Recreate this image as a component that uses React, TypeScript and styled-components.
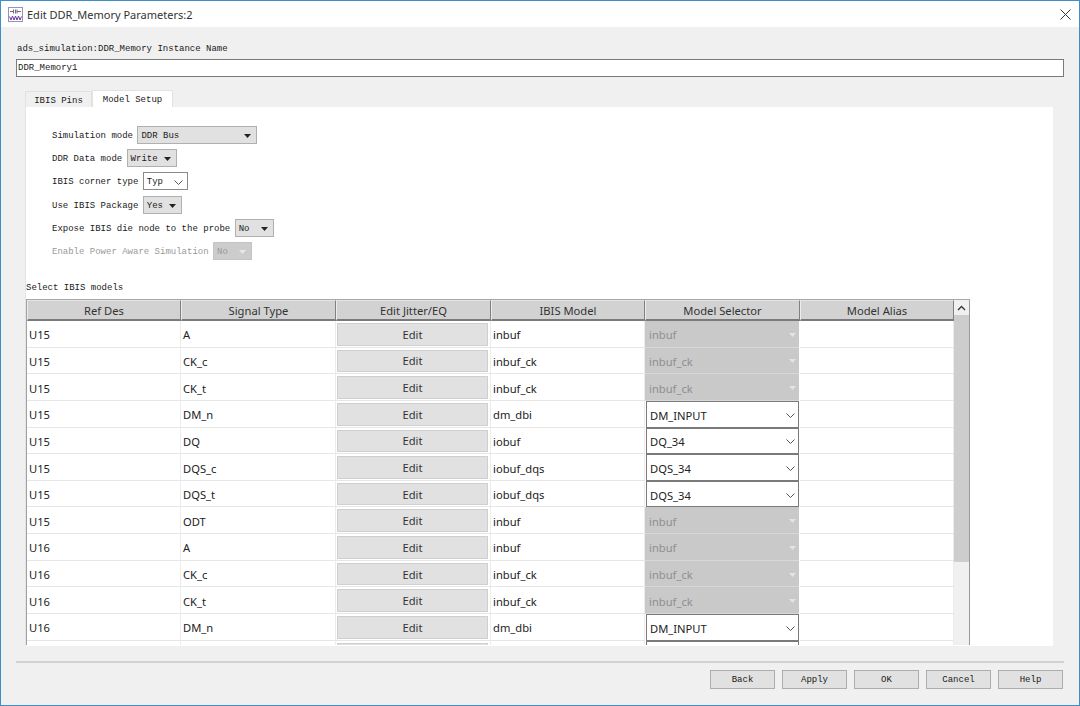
import React from "react";
import styled, { createGlobalStyle } from "styled-components";

const Global = createGlobalStyle`
  * { box-sizing: border-box; }
  html, body { margin: 0; padding: 0; background: #f0f0f0; }
`;
const mono = `"Liberation Mono", "DejaVu Sans Mono", monospace`;
const sans = `"Noto Sans", "Open Sans", sans-serif`;

const Win = styled.div`
  width: 1080px; height: 706px; overflow: hidden;
  border: 1px solid #3d8ec9;
  background: #f0f0f0; display: flex; flex-direction: column;
  font-family: ${mono}; font-size: 9px; color: #1a1a1a;
`;
const TitleBar = styled.div`
  height: 26px; flex: none; background: #fff; display: flex; align-items: center;
  padding: 0 8px 0 7px; gap: 4px;
  font-family: ${sans}; font-size: 11px; color: #333;
`;
const TitleText = styled.span` flex: 1; `;
const Main = styled.div`
  flex: 1; min-height: 0; display: flex; flex-direction: column; padding: 15px 15px 0 15px;
`;
const NameLabel = styled.div` height: 17px; line-height: 12px; padding: 1px 0 0 1px; `;
const NameInput = styled.div`
  height: 18px; flex: none; background: #fff; border: 1px solid #7a7a7a; padding-left: 1px; line-height: 16px;
`;
const Tabs = styled.div`
  display: flex; align-items: flex-end; height: 30px; flex: none; margin-left: 9px;
`;
const Tab = styled.div<{ $active?: boolean }>`
  height: ${(p) => (p.$active ? 17 : 16)}px; line-height: ${(p) => (p.$active ? 18 : 19)}px;
  text-align: center;
  width: ${(p) => (p.$active ? 81 : 67)}px;
  background: ${(p) => (p.$active ? "#fff" : "#f0f0f0")};
  border: 1px solid #e2e2e2; border-bottom: none;
  white-space: nowrap;
`;
const Pane = styled.div`
  margin-left: 9px; width: 1028px; height: 539px; flex: none; background: #fff;
  border-left: 1px solid #e4e4e4; display: flex; flex-direction: column; padding: 19px 0 0 0;
`;
const Form = styled.div`
  display: flex; flex-direction: column; gap: 5.2px; padding-left: 26px; height: 156px; flex: none;
`;
const FormRow = styled.div<{ $disabled?: boolean }>`
  display: flex; align-items: center; gap: 4.4px; height: 18px;
  color: ${(p) => (p.$disabled ? "#9a9a9a" : "#1a1a1a")};
`;
const FieldLabel = styled.span` padding-top: 2px; white-space: nowrap; `;
const Select = styled.div<{ $w: number; $plain?: boolean; $disabled?: boolean }>`
  width: ${(p) => p.$w}px; height: 18px; display: flex; align-items: center; justify-content: space-between;
  padding: 2px ${(p) => (p.$plain ? 4 : 5)}px 0 3px;
  background: ${(p) => (p.$plain ? "#fff" : p.$disabled ? "#cccccc" : "#e1e1e1")};
  border: 1px solid ${(p) => (p.$plain ? "#8a8a8a" : p.$disabled ? "#c4c4c4" : "#b0b0b0")};
`;
const SectionLabel = styled.div` height: 17px; line-height: 13px; flex: none; `;
const TableFrame = styled.div`
  width: 944px; height: 346px; display: flex; flex: none; overflow: hidden;
  border-top: 1px solid #a8a8a8; border-left: 1px solid #a0a0a0;
`;
const Grid = styled.div` width: 927px; flex: none; display: flex; flex-direction: column; `;
const Columns = "154px 155px 155px 154px 155px 154px";
const HeaderRow = styled.div`
  display: grid; grid-template-columns: ${Columns}; height: 21px; flex: none;
`;
const HeaderCell = styled.div`
  background: #d2d2d2; border-right: 1px solid #808080; border-bottom: 2px solid #7a7a7a;
  border-left: 1px solid #ececec; border-top: 1px solid #e4e4e4;
  display: flex; align-items: center; justify-content: center;
  font-family: ${sans}; font-size: 11.2px; color: #333;
`;
const Row = styled.div`
  display: grid; grid-template-columns: ${Columns}; height: 26.65px; flex: none;
  font-family: ${sans}; font-size: 11.2px; color: #222;
`;
const Cell = styled.div`
  border-right: 1px solid #ececec; border-bottom: 1px solid #e6e6e6; background: #fff;
  display: flex; align-items: center; padding: 2px 0 0 2px; white-space: nowrap;
`;
const ButtonCell = styled(Cell)` padding: 2px 2px 1px 1px; `;
const EditButton = styled.div`
  flex: 1; height: 100%; background: #e1e1e1; border: 1px solid #cfcfcf;
  display: flex; align-items: center; justify-content: center; color: #333;
`;
const ComboCell = styled(Cell)<{ $disabled?: boolean }>`
  padding: 2px 3px 0 ${(p) => (p.$disabled ? 4 : 3)}px; justify-content: space-between;
  background: ${(p) => (p.$disabled ? "#c9c9c9" : "#fff")};
  color: ${(p) => (p.$disabled ? "#8f8f8f" : "#222")};
  border: ${(p) => (p.$disabled ? "none" : "1px solid #7a7a7a")};
  border-bottom: ${(p) => (p.$disabled ? "1px solid #d8d8d8" : "1px solid #7a7a7a")};
  margin: 0 1px 0 ${(p) => (p.$disabled ? 0 : 1)}px;
`;
const Scrollbar = styled.div`
  flex: 1; background: #f0f0f0; display: flex; flex-direction: column; border-right: 1px solid #9a9a9a;
`;
const ScrollUp = styled.div`
  height: 15px; display: flex; align-items: center; justify-content: center; background: #f0f0f0;
`;
const ScrollThumb = styled.div` height: 247px; background: #cdcdcd; `;
const Footer = styled.div`
  margin-top: 15px; border-top: 2px solid #d2d2d2; display: flex; justify-content: flex-end; gap: 7px;
  padding: 7px 1px 0 0; flex: none;
`;
const Btn = styled.div`
  width: 65px; height: 19px; background: #e1e1e1; border: 1px solid #adadad;
  display: flex; align-items: center; justify-content: center; padding-top: 1px;
`;

const Tri = ({ c = "#222" }: { c?: string }) => (
  <svg width="7" height="4" viewBox="0 0 7 4"><path d="M0 0h7L3.5 4z" fill={c} /></svg>
);
const Chev = ({ c = "#555" }: { c?: string }) => (
  <svg width="9" height="5" viewBox="0 0 9 5" fill="none"><path d="M.5.5l4 4 4-4" stroke={c} /></svg>
);
const AppIcon = () => (
  <svg width="15" height="15" viewBox="0 0 15 15" fill="none">
    <rect x=".5" y=".5" width="14" height="14" fill="#fff" stroke="#9a90b8" />
    <path d="M2 4.5h3.5M9 4.5h4M5.5 2.5v4M7.5 2.5v4M9 2.5v4" stroke="#6f6a88" />
    <path d="M1.5 9.5l1.5 3.5 1.5-4 1.5 4 1.5-4 1.5 4 1.5-4 1.5 4 1.5-3.5" stroke="#6a3a9c" />
  </svg>
);
const CloseIcon = () => (
  <svg width="11" height="11" viewBox="0 0 11 11"><path d="M.5.5l10 10M10.5.5l-10 10" stroke="#333" /></svg>
);

type R = [string, string, string, string, boolean];
const rows: R[] = [
  ["U15", "A", "inbuf", "inbuf", true],
  ["U15", "CK_c", "inbuf_ck", "inbuf_ck", true],
  ["U15", "CK_t", "inbuf_ck", "inbuf_ck", true],
  ["U15", "DM_n", "dm_dbi", "DM_INPUT", false],
  ["U15", "DQ", "iobuf", "DQ_34", false],
  ["U15", "DQS_c", "iobuf_dqs", "DQS_34", false],
  ["U15", "DQS_t", "iobuf_dqs", "DQS_34", false],
  ["U15", "ODT", "inbuf", "inbuf", true],
  ["U16", "A", "inbuf", "inbuf", true],
  ["U16", "CK_c", "inbuf_ck", "inbuf_ck", true],
  ["U16", "CK_t", "inbuf_ck", "inbuf_ck", true],
  ["U16", "DM_n", "dm_dbi", "DM_INPUT", false],
];
const heads = ["Ref Des", "Signal Type", "Edit Jitter/EQ", "IBIS Model", "Model Selector", "Model Alias"];

export default function App() {
  return (
    <Win>
      <Global />
      <TitleBar>
        <AppIcon />
        <TitleText>Edit DDR_Memory Parameters:2</TitleText>
        <CloseIcon />
      </TitleBar>
      <Main>
        <NameLabel>ads_simulation:DDR_Memory Instance Name</NameLabel>
        <NameInput>DDR_Memory1</NameInput>
        <Tabs>
          <Tab>IBIS Pins</Tab>
          <Tab $active>Model Setup</Tab>
        </Tabs>
        <Pane>
          <Form>
            <FormRow><FieldLabel>Simulation mode</FieldLabel><Select $w={120}>DDR Bus<Tri /></Select></FormRow>
            <FormRow><FieldLabel>DDR Data mode</FieldLabel><Select $w={50}>Write<Tri /></Select></FormRow>
            <FormRow><FieldLabel>IBIS corner type</FieldLabel><Select $w={45} $plain>Typ<Chev /></Select></FormRow>
            <FormRow><FieldLabel>Use IBIS Package</FieldLabel><Select $w={39}>Yes<Tri /></Select></FormRow>
            <FormRow><FieldLabel>Expose IBIS die node to the probe</FieldLabel><Select $w={39}>No<Tri /></Select></FormRow>
            <FormRow $disabled><FieldLabel>Enable Power Aware Simulation</FieldLabel><Select $w={39} $disabled>No<Tri c="#e8e8e8" /></Select></FormRow>
          </Form>
          <SectionLabel>Select IBIS models</SectionLabel>
          <TableFrame>
            <Grid>
              <HeaderRow>{heads.map((h) => <HeaderCell key={h}>{h}</HeaderCell>)}</HeaderRow>
              {rows.map((r, i) => (
                <Row key={i}>
                  <Cell>{r[0]}</Cell>
                  <Cell>{r[1]}</Cell>
                  <ButtonCell><EditButton>Edit</EditButton></ButtonCell>
                  <Cell>{r[2]}</Cell>
                  <ComboCell $disabled={r[4]}>{r[3]}{r[4] ? <Tri c="#e4e4e4" /> : <Chev />}</ComboCell>
                  <Cell />
                </Row>
              ))}
              <Row>
                <Cell />
                <Cell />
                <ButtonCell><EditButton /></ButtonCell>
                <Cell />
                <ComboCell />
                <Cell />
              </Row>
            </Grid>
            <Scrollbar>
              <ScrollUp>
                <svg width="9" height="6" viewBox="0 0 9 6" fill="none"><path d="M1 5l3.5-3.5L8 5" stroke="#333" strokeWidth="1.3" /></svg>
              </ScrollUp>
              <ScrollThumb />
            </Scrollbar>
          </TableFrame>
        </Pane>
        <Footer>
          {["Back", "Apply", "OK", "Cancel", "Help"].map((b) => <Btn key={b}>{b}</Btn>)}
        </Footer>
      </Main>
    </Win>
  );
}
